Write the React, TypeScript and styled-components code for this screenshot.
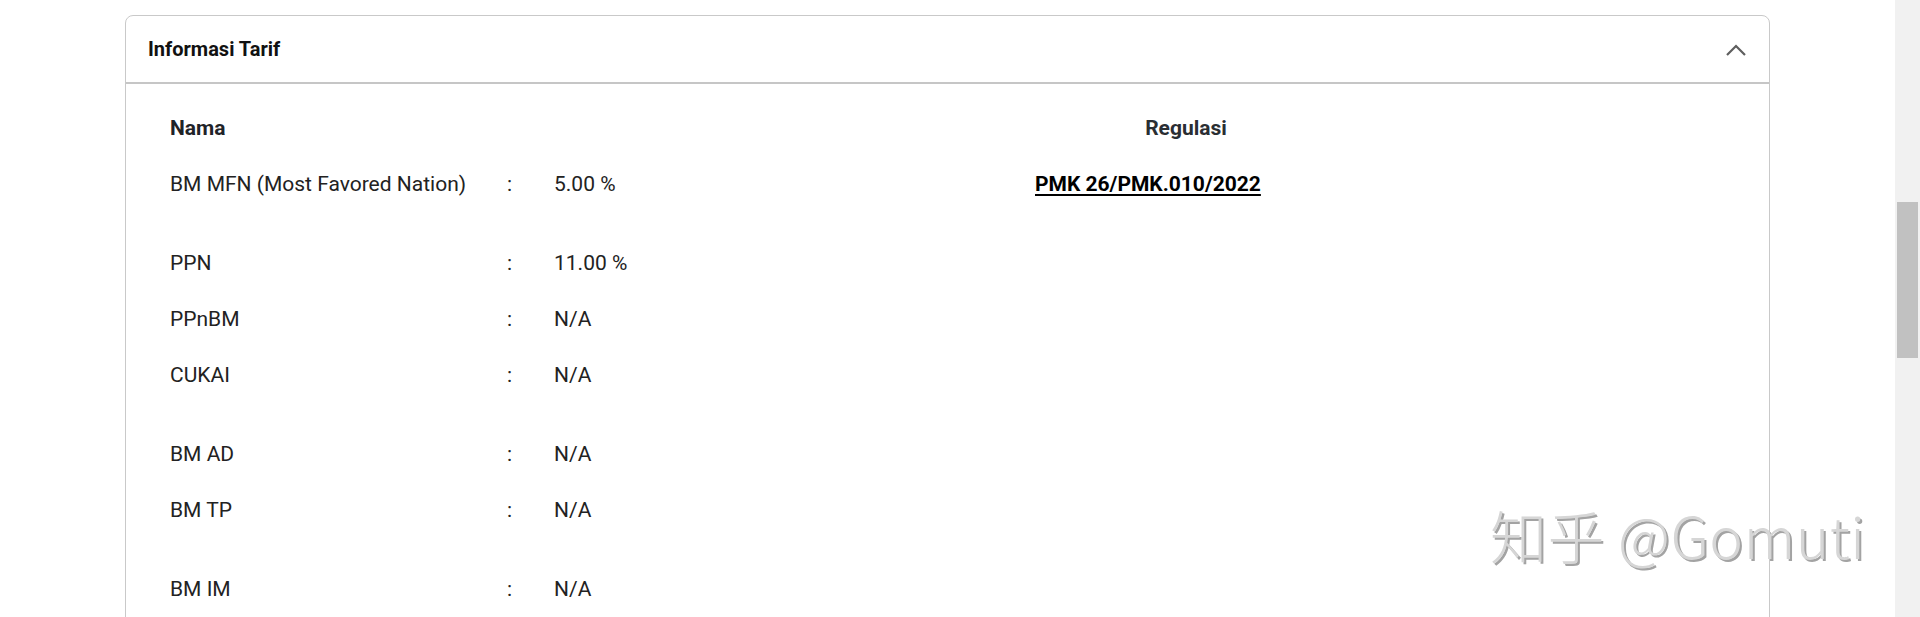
import React from "react";
import styled, { createGlobalStyle } from "styled-components";

const Global = createGlobalStyle`
  html, body { margin: 0; padding: 0; background: #fff; }
  body { font-family: Roboto, "Noto Sans", Arial, sans-serif; color: #212529; overflow: hidden; }
`;

const Page = styled.div`
  position: relative;
  display: flex;
  width: 1920px;
  height: 617px;
  overflow: hidden;
`;

const Main = styled.main`
  flex: 1;
  padding: 15px 125px 0 125px;
`;

const Card = styled.section`
  border: 1px solid #c9c9c9;
  border-radius: 8px;
  height: 700px;
  background: #fff;
`;

const Header = styled.div`
  display: flex;
  align-items: center;
  justify-content: space-between;
  height: 66px;
  padding: 0 23px 0 22px;
  border-bottom: 2px solid #c6c6c6;
`;

const Title = styled.h2`
  margin: 0;
  font-size: 20px;
  font-weight: 700;
  color: #111;
`;

const Chevron = styled.svg`
  width: 20px;
  height: 12px;
  display: block;
  margin-top: 2px;
`;

const Body = styled.div`
  padding: 17px 44px 0 44px;
`;

const Grid = styled.div`
  display: grid;
  grid-template-columns: 337px 47px 481px 302px 1fr;
`;

const Row = styled.div`
  display: contents;
`;

const Cell = styled.div<{ $h: number; $mt?: number; $bold?: boolean; $center?: boolean }>`
  height: ${(p) => p.$h}px;
  line-height: ${(p) => p.$h}px;
  margin-top: ${(p) => p.$mt ?? 0}px;
  font-size: 21px;
  font-weight: ${(p) => (p.$bold ? 700 : 400)};
  text-align: ${(p) => (p.$center ? "center" : "left")};
  color: #222;
  white-space: nowrap;
`;

const HeadCell = styled(Cell)`
  color: #1f2328;
`;

const RegHead = styled(Cell)`
  color: #2a2e33;
`;

const RegLink = styled.a`
  font-size: 21px;
  font-weight: 700;
  color: #000;
  text-decoration: underline;
  text-underline-offset: 3px;
`;

const Track = styled.div`
  width: 25px;
  height: 617px;
  background: #f1f1f1;
  position: relative;
`;

const Thumb = styled.div`
  position: absolute;
  left: 2px;
  top: 202px;
  width: 21px;
  height: 156px;
  background: #c1c1c1;
`;

const Watermark = styled.div`
  position: absolute;
  left: 1490px;
  top: 506px;
  font-family: "Noto Sans CJK SC", "Noto Sans", sans-serif;
  font-size: 57px;
  font-weight: 300;
  line-height: 1;
  letter-spacing: 0.5px;
  color: #d6d6d6;
  text-shadow: 2px 2px 0 #a3a3a3;
  white-space: nowrap;
  pointer-events: none;
`;

type Item = { name: string; value: string; reg?: string };

const groups: Item[][] = [
  [{ name: "BM MFN (Most Favored Nation)", value: "5.00 %", reg: "PMK 26/PMK.010/2022" }],
  [
    { name: "PPN", value: "11.00 %" },
    { name: "PPnBM", value: "N/A" },
    { name: "CUKAI", value: "N/A" },
  ],
  [
    { name: "BM AD", value: "N/A" },
    { name: "BM TP", value: "N/A" },
  ],
  [{ name: "BM IM", value: "N/A" }],
];

export default function App() {
  return (
    <>
      <Global />
      <Page>
        <Main>
          <Card>
            <Header>
              <Title>Informasi Tarif</Title>
              <Chevron viewBox="0 0 20 12">
                <polyline points="1,11 10,2 19,11" fill="none" stroke="#5f5f5f" strokeWidth="2.2" />
              </Chevron>
            </Header>
            <Body>
              <Grid>
                <Row>
                  <HeadCell $h={55} $bold>Nama</HeadCell>
                  <Cell $h={55} />
                  <Cell $h={55} />
                  <RegHead $h={55} $bold $center>Regulasi</RegHead>
                  <Cell $h={55} />
                </Row>
                {groups.map((g, gi) =>
                  g.map((it, ii) => {
                    const mt = gi > 0 && ii === 0 ? 23 : 0;
                    return (
                      <Row key={`${gi}-${ii}`}>
                        <Cell $h={56} $mt={mt}>{it.name}</Cell>
                        <Cell $h={56} $mt={mt}>:</Cell>
                        <Cell $h={56} $mt={mt}>{it.value}</Cell>
                        <Cell $h={56} $mt={mt}>
                          {it.reg ? <RegLink href="#">{it.reg}</RegLink> : null}
                        </Cell>
                        <Cell $h={56} $mt={mt} />
                      </Row>
                    );
                  })
                )}
              </Grid>
            </Body>
          </Card>
        </Main>
        <Track>
          <Thumb />
        </Track>
        <Watermark>知乎 @Gomuti</Watermark>
      </Page>
    </>
  );
}
